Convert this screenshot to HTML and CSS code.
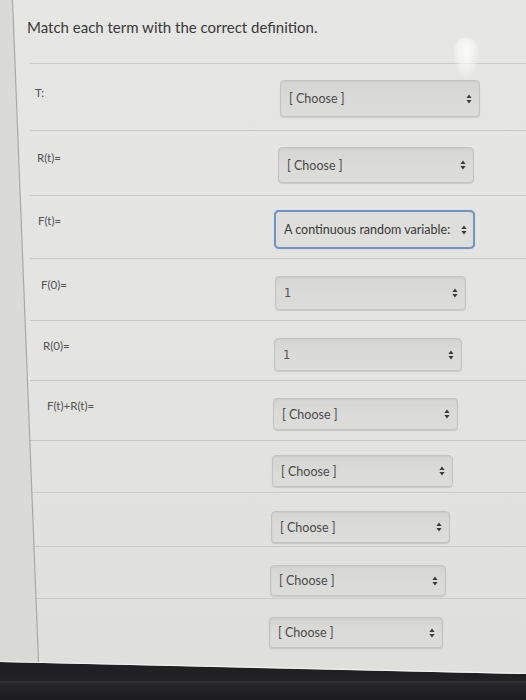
FILE: index.html
```html
<!DOCTYPE html>
<html>
<head>
<meta charset="utf-8">
<link rel="stylesheet" href="styles.css">
</head>
<body>
<div class="screen">
  <div class="sheet">
    <h1 class="title">Match each term with the correct definition.</h1>
    <div class="list">
      <div class="row">
        <div class="term">T:</div>
        <div class="select"><span class="value">[ Choose ]</span><svg class="arrows" viewBox="0 0 6 10"><path d="M3 0.5 L5.6 4 L0.4 4 Z M3 9.5 L5.6 6 L0.4 6 Z"/></svg></div>
      </div>
      <div class="row">
        <div class="term">R(t)=</div>
        <div class="select"><span class="value">[ Choose ]</span><svg class="arrows" viewBox="0 0 6 10"><path d="M3 0.5 L5.6 4 L0.4 4 Z M3 9.5 L5.6 6 L0.4 6 Z"/></svg></div>
      </div>
      <div class="row">
        <div class="term">F(t)=</div>
        <div class="select focused"><span class="value">A continuous random variable:</span><svg class="arrows" viewBox="0 0 6 10"><path d="M3 0.5 L5.6 4 L0.4 4 Z M3 9.5 L5.6 6 L0.4 6 Z"/></svg></div>
      </div>
      <div class="row">
        <div class="term">F(0)=</div>
        <div class="select"><span class="value num">1</span><svg class="arrows" viewBox="0 0 6 10"><path d="M3 0.5 L5.6 4 L0.4 4 Z M3 9.5 L5.6 6 L0.4 6 Z"/></svg></div>
      </div>
      <div class="row">
        <div class="term">R(0)=</div>
        <div class="select"><span class="value num">1</span><svg class="arrows" viewBox="0 0 6 10"><path d="M3 0.5 L5.6 4 L0.4 4 Z M3 9.5 L5.6 6 L0.4 6 Z"/></svg></div>
      </div>
      <div class="row">
        <div class="term">F(t)+R(t)=</div>
        <div class="select"><span class="value">[ Choose ]</span><svg class="arrows" viewBox="0 0 6 10"><path d="M3 0.5 L5.6 4 L0.4 4 Z M3 9.5 L5.6 6 L0.4 6 Z"/></svg></div>
      </div>
      <div class="row">
        <div class="term"></div>
        <div class="select"><span class="value">[ Choose ]</span><svg class="arrows" viewBox="0 0 6 10"><path d="M3 0.5 L5.6 4 L0.4 4 Z M3 9.5 L5.6 6 L0.4 6 Z"/></svg></div>
      </div>
      <div class="row">
        <div class="term"></div>
        <div class="select"><span class="value">[ Choose ]</span><svg class="arrows" viewBox="0 0 6 10"><path d="M3 0.5 L5.6 4 L0.4 4 Z M3 9.5 L5.6 6 L0.4 6 Z"/></svg></div>
      </div>
      <div class="row">
        <div class="term"></div>
        <div class="select"><span class="value">[ Choose ]</span><svg class="arrows" viewBox="0 0 6 10"><path d="M3 0.5 L5.6 4 L0.4 4 Z M3 9.5 L5.6 6 L0.4 6 Z"/></svg></div>
      </div>
      <div class="row last">
        <div class="term"></div>
        <div class="select"><span class="value">[ Choose ]</span><svg class="arrows" viewBox="0 0 6 10"><path d="M3 0.5 L5.6 4 L0.4 4 Z M3 9.5 L5.6 6 L0.4 6 Z"/></svg></div>
      </div>
    </div>
  </div>
  <svg class="edge" viewBox="0 0 526 674" preserveAspectRatio="none">
    <polygon points="0,0 12,0 38,662 0,662" fill="#dadad7"/>
    <line x1="12.5" y1="0" x2="38.5" y2="662" stroke="#a8a8a6" stroke-width="1.2"/>
    <polygon points="0,662 526,674 0,674" fill="#202023"/>
    <line x1="0" y1="661.5" x2="526" y2="673.5" stroke="#f0f0ee" stroke-width="1.2"/>
  </svg>
  <div class="glare"></div>
</div>
<div class="bezel"></div>
</body>
</html>
```

FILE: styles.css
```css
html, body {
  margin: 0;
  padding: 0;
}
body {
  width: 526px;
  height: 700px;
  overflow: hidden;
  background: #222226;
  font-family: Lato, "Open Sans", sans-serif;
  color: #3c3c3c;
}
.screen {
  position: relative;
  height: 674px;
  background: linear-gradient(180deg, #e6e6e4 0%, #e3e3e1 60%, #dfdfdc 100%);
  overflow: hidden;
}
.sheet {
  padding-top: 18px;
}
.title {
  margin: 0 0 0 27px;
  font-size: 15px;
  font-weight: 400;
  line-height: 18px;
  color: #3a3a3a;
}
.list {
  margin-top: 27px;
  margin-left: 30px;
  border-top: 1px solid #cbcbc9;
}
.row {
  box-sizing: border-box;
  display: grid;
  grid-template-columns: var(--sx) var(--sw);
  align-items: start;
  height: var(--rh);
  padding-top: var(--pt);
  border-bottom: 1px solid #c9c9c7;
}
.row.last {
  border-bottom: none;
}
.row:nth-child(1)  { --rh: 67px; --pt: 16px; --sx: 250px; --sw: 200px; --sh: 37px; --lx: 5px;  --lt: 6px; }
.row:nth-child(2)  { --rh: 65px; --pt: 16px; --sx: 248px; --sw: 196px; --sh: 36px; --lx: 7px;  --lt: 4px; }
.row:nth-child(3)  { --rh: 63px; --pt: 14px; --sx: 244px; --sw: 201px; --sh: 39px; --lx: 8px;  --lt: 4px; }
.row:nth-child(4)  { --rh: 62px; --pt: 17px; --sx: 245px; --sw: 191px; --sh: 34px; --lx: 11px; --lt: 2px; }
.row:nth-child(5)  { --rh: 60px; --pt: 17px; --sx: 244px; --sw: 188px; --sh: 33px; --lx: 13px; --lt: 1px; }
.row:nth-child(6)  { --rh: 60px; --pt: 17px; --sx: 243px; --sw: 185px; --sh: 32px; --lx: 17px; --lt: 1px; }
.row:nth-child(7)  { --rh: 52px; --pt: 14px; --sx: 242px; --sw: 181px; --sh: 32px; --lx: 17px; --lt: 1px; }
.row:nth-child(8)  { --rh: 54px; --pt: 18px; --sx: 241px; --sw: 179px; --sh: 32px; --lx: 17px; --lt: 1px; }
.row:nth-child(9)  { --rh: 52px; --pt: 18px; --sx: 240px; --sw: 176px; --sh: 31px; --lx: 17px; --lt: 1px; }
.row:nth-child(10) { --rh: 64px; --pt: 18px; --sx: 239px; --sw: 174px; --sh: 31px; --lx: 17px; --lt: 1px; }

.term {
  padding-left: var(--lx);
  padding-top: var(--lt);
  font-size: 11.5px;
  line-height: 14px;
  color: #525252;
}
.select {
  box-sizing: border-box;
  height: var(--sh);
  display: flex;
  align-items: center;
  justify-content: space-between;
  padding: 0 7px 0 8px;
  border: 1px solid #c3c3c1;
  border-radius: 4px;
  background: linear-gradient(180deg, #d5d5d3 0%, #dadad8 45%, #dcdcda 100%);
  box-shadow: 0 1px 1px rgba(0, 0, 0, 0.12), inset 0 1px 2px rgba(0, 0, 0, 0.05);
}
.select.focused {
  border: 2px solid #6f95c8;
  border-radius: 5px;
  padding: 0 6px 0 8px;
  background: #dededc;
  box-shadow: 0 0 1px rgba(80, 120, 180, 0.5);
}
.value {
  font-size: 12.5px;
  color: #4a4a4a;
  white-space: nowrap;
}
.focused .value {
  color: #3a3a3a;
}
.value.num {
  font-family: "DejaVu Sans", sans-serif;
  font-size: 11.5px;
  color: #555;
}
.arrows {
  width: 6px;
  height: 10px;
  fill: #3a3a3a;
  flex: none;
}
.edge {
  position: absolute;
  left: 0;
  top: 0;
  width: 526px;
  height: 674px;
  pointer-events: none;
}
.glare {
  position: absolute;
  left: 453px;
  top: 38px;
  width: 26px;
  height: 40px;
  border-radius: 40% 40% 50% 50%;
  background: radial-gradient(ellipse at 50% 35%, rgba(255, 255, 255, 0.85) 0%, rgba(255, 255, 255, 0.5) 40%, rgba(255, 255, 255, 0) 75%);
  pointer-events: none;
}
.bezel {
  height: 26px;
  background: linear-gradient(180deg, #202023 0%, #222225 25%, #36363a 30%, #262629 38%, #1d1d20 100%);
}
```
